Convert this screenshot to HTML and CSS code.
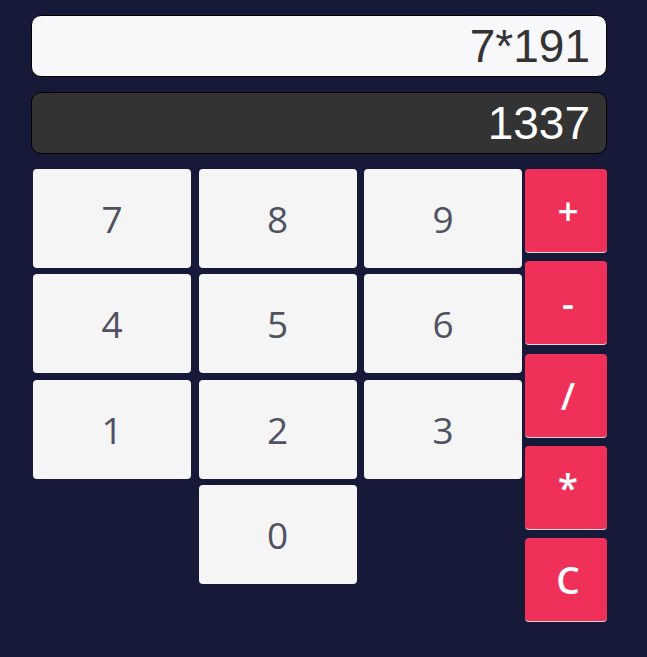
FILE: index.html
```html
<!DOCTYPE html>
<html>
<head>
<meta charset="utf-8">
<link rel="stylesheet" href="styles.css">
</head>
<body>
<div class="calc">
  <div class="display display-input">7*191</div>
  <div class="display display-result">1337</div>
  <div class="keypad">
    <div class="digits">
      <button class="key">7</button>
      <button class="key">8</button>
      <button class="key">9</button>
      <button class="key">4</button>
      <button class="key">5</button>
      <button class="key">6</button>
      <button class="key">1</button>
      <button class="key">2</button>
      <button class="key">3</button>
      <button class="key key-zero">0</button>
    </div>
    <div class="ops">
      <button class="op">+</button>
      <button class="op">-</button>
      <button class="op">/</button>
      <button class="op">*</button>
      <button class="op">C</button>
    </div>
  </div>
</div>
</body>
</html>
```
FILE: styles.css
```css
html, body {
  margin: 0;
  background: #161a38;
}
body {
  padding: 15px 0 0 31px;
}
.calc {
  width: 576px;
  display: flex;
  flex-direction: column;
  gap: 15px;
}
.display {
  box-sizing: border-box;
  height: 62px;
  border: 1px solid #000;
  border-radius: 10px;
  font-family: "Liberation Sans", Arial, sans-serif;
  font-size: 46px;
  line-height: 60px;
  text-align: right;
  padding: 0 16px;
}
.display-input {
  background: #f8f8fa;
  color: #333;
}
.display-result {
  background: #333;
  color: #fff;
}
.keypad {
  display: flex;
  gap: 3px;
  padding-left: 2px;
}
.digits {
  display: grid;
  grid-template-columns: repeat(3, 158px);
  grid-auto-rows: 99px;
  column-gap: 7.5px;
  row-gap: 6.3px;
}
.key-zero {
  grid-column: 2;
}
.key, .op {
  border: none;
  margin: 0;
  padding: 0;
  font-family: "Open Sans", sans-serif;
  font-size: 37px;
  border-radius: 4px;
}
.key {
  background: #f5f5f6;
  color: #4f5261;
  font-weight: 500;
}
.ops {
  display: flex;
  flex-direction: column;
  gap: 8.25px;
}
.op {
  width: 82px;
  height: 84px;
  padding-left: 4px;
  background: #ef3159;
  color: #fff;
  font-weight: 600;
  box-sizing: border-box;
  border-bottom: 1px solid #d8d8dc;
}
```
